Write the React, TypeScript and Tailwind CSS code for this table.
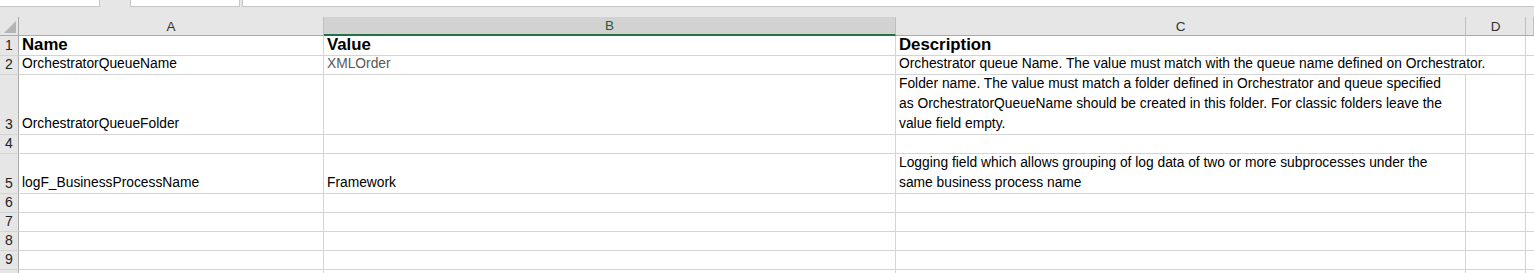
import type { ReactNode } from "react"

const font = { fontFamily: '"Liberation Sans", Arial, sans-serif' }

const columns = ["A", "B", "C", "D", ""]

interface Row {
  num: number
  height: string
  name?: ReactNode
  value?: ReactNode
  desc?: ReactNode
  overflow?: boolean
  header?: boolean
}

const rows: Row[] = [
  { num: 1, height: "h-[20px]", name: "Name", value: "Value", desc: "Description", header: true },
  {
    num: 2,
    height: "h-[19px]",
    name: "OrchestratorQueueName",
    value: <span className="text-[#595959]">XMLOrder</span>,
    desc: "Orchestrator queue Name. The value must match with the queue name defined on Orchestrator.",
    overflow: true,
  },
  {
    num: 3,
    height: "h-[60px]",
    name: "OrchestratorQueueFolder",
    desc: (
      <>
        <div>Folder name. The value must match a folder defined in Orchestrator and queue specified</div>
        <div>as OrchestratorQueueName should be created in this folder. For classic folders leave the</div>
        <div>value field empty.</div>
      </>
    ),
  },
  { num: 4, height: "h-[19px]" },
  {
    num: 5,
    height: "h-[40px]",
    name: "logF_BusinessProcessName",
    value: "Framework",
    desc: (
      <>
        <div>Logging field which allows grouping of log data of two or more subprocesses under the</div>
        <div>same business process name</div>
      </>
    ),
  },
  { num: 6, height: "h-[19px]" },
  { num: 7, height: "h-[19px]" },
  { num: 8, height: "h-[19px]" },
  { num: 9, height: "h-[19px]" },
  { num: 10, height: "h-[19px]" },
]

// the last row only peeks in at the bottom edge, so its number stays hidden
const lastVisibleNumber = 9

function Cell({
  children,
  header,
  noRight,
  className = "",
}: {
  children?: ReactNode
  header?: boolean
  noRight?: boolean
  className?: string
}) {
  return (
    <div
      className={`flex items-end border-b border-[#d4d4d4] pl-[3px] text-black ${
        noRight ? "" : "border-r"
      } ${header ? "pb-[1px] text-[16.8px] font-bold leading-[18px]" : "text-[13.8px] leading-[20px]"} ${className}`}
    >
      {children != null && <div className="relative z-10 whitespace-nowrap">{children}</div>}
    </div>
  )
}

export default function App() {
  return (
    <div className="h-[273px] w-[1534px] overflow-hidden bg-white" style={font}>
      {/* sheet tab strip */}
      <div className="flex h-[17px] items-start bg-[#e6e6e6]">
        <div className="h-[7px] w-[100px] border-b border-r border-[#c6c6c6] bg-white" />
        <div className="ml-[30px] h-[7px] w-[110px] border-b border-l border-r border-[#c6c6c6] bg-white" />
        <div className="ml-[2px] h-[7px] flex-1 border-b border-l border-[#c6c6c6] bg-white" />
      </div>

      <div className="grid grid-cols-[19px_305px_572px_570px_60px_1fr]">
        {/* column headers */}
        <div className="relative h-[19px] border-b border-r border-[#ababab] bg-[#e6e6e6]">
          <svg className="absolute bottom-[2px] right-[2px]" width="12" height="12" viewBox="0 0 12 12">
            <polygon points="12,0 12,12 0,12" fill="#b4b4b4" />
          </svg>
        </div>
        {columns.map((c) => (
          <div
            key={c || "E"}
            className={`flex h-[19px] items-end justify-center border-r text-[13.5px] leading-[17px] ${
              c === "B"
                ? "border-b-2 border-r-[#bfbfbf] border-b-[#217346] bg-[#d2d2d2] text-[#1e5e37]"
                : "border-b border-r-[#bfbfbf] border-b-[#ababab] bg-[#e6e6e6] text-[#333]"
            }`}
          >
            {c}
          </div>
        ))}

        {rows.map((r) => (
          <div key={r.num} className="contents">
            <div
              className={`flex items-end justify-center border-b border-r border-b-[#d4d4d4] border-r-[#ababab] bg-[#e6e6e6] text-[14px] leading-[20px] text-[#222] ${r.height}`}
            >
              {r.num <= lastVisibleNumber ? r.num : null}
            </div>
            <Cell header={r.header} className={r.height}>
              {r.name}
            </Cell>
            <Cell header={r.header} className={r.height}>
              {r.value}
            </Cell>
            <Cell header={r.header} noRight={r.overflow} className={r.height}>
              {r.desc}
            </Cell>
            <Cell className={r.height} />
            <Cell className={r.height} noRight />
          </div>
        ))}
      </div>
    </div>
  )
}
